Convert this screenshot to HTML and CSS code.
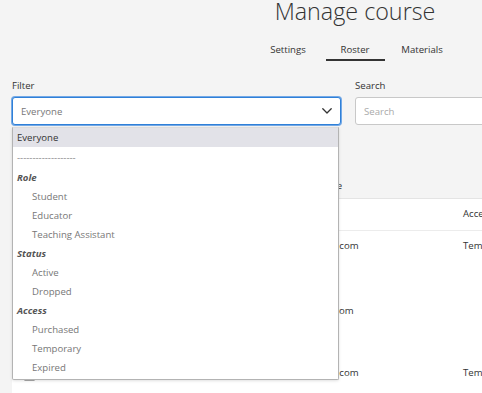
FILE: index.html
```html
<!DOCTYPE html>
<html lang="en">
<head>
<meta charset="utf-8">
<title>Manage course</title>
<link rel="stylesheet" href="styles.css">
</head>
<body>
<div class="page">
  <h1 class="title">Manage course</h1>
  <nav class="tabs">
    <a class="tab">Settings</a>
    <a class="tab active">Roster</a>
    <a class="tab">Materials</a>
  </nav>

  <div class="filters">
    <div class="field filter">
      <label class="label">Filter</label>
      <div class="select">
        <span>Everyone</span>
        <svg class="chevron" width="10" height="6" viewBox="0 0 10 6"><path d="M0.8 0.8 L5 5 L9.2 0.8" fill="none" stroke="#333" stroke-width="1.3" stroke-linecap="round" stroke-linejoin="round"/></svg>
      </div>
      <ul class="listbox">
        <li class="opt sel">Everyone</li>
        <li class="opt dash">-------------------</li>
        <li class="opt group">Role</li>
        <li class="opt indent">Student</li>
        <li class="opt indent">Educator</li>
        <li class="opt indent">Teaching Assistant</li>
        <li class="opt group">Status</li>
        <li class="opt indent">Active</li>
        <li class="opt indent">Dropped</li>
        <li class="opt group">Access</li>
        <li class="opt indent">Purchased</li>
        <li class="opt indent">Temporary</li>
        <li class="opt indent">Expired</li>
      </ul>
    </div>
    <div class="field search">
      <label class="label">Search</label>
      <input class="input" type="text" placeholder="Search">
    </div>
  </div>

  <div class="table">
    <div class="row head">
      <span></span><span>Name</span><span>Email / Username</span><span></span>
    </div>
    <div class="tbody">
      <div class="row sub">
        <span></span><span></span><span></span><span>Access</span>
      </div>
      <div class="row r2">
        <span class="check"></span><span>Alex Johnson</span><span>dave1@example.com</span><span>Temporary</span>
      </div>
      <div class="row r3">
        <span class="check"></span><span>Ana Lopez</span><span>ana1@example.com</span><span></span>
      </div>
      <div class="row r4">
        <span class="check"></span><span>Sam Carter</span><span>dave2@example.com</span><span>Temporary</span>
      </div>
    </div>
  </div>
</div>
</body>
</html>
```

FILE: styles.css
```css
html, body {
  margin: 0;
  padding: 0;
}
body {
  background: #f4f4f4;
  font-family: "Open Sans", "Noto Sans", sans-serif;
  font-size: 9.6px;
  color: #333;
  overflow: hidden;
}
.page {
  width: 710px;
}
.title {
  margin: 0;
  text-align: center;
  font-size: 23.3px;
  font-weight: 300;
  line-height: 23px;
  color: #333;
}
.tabs {
  display: flex;
  justify-content: center;
  margin-top: 16px;
}
.tab {
  width: 59px;
  margin: 0 4px;
  text-align: center;
  padding: 4px 0 2px;
  line-height: 14px;
  border-bottom: 2px solid transparent;
  color: #333;
}
.tab.active {
  border-bottom-color: #333;
}
.filters {
  display: flex;
  gap: 14px;
  padding-left: 12px;
  margin-top: 18px;
}
.label {
  display: block;
  line-height: 14px;
  margin-bottom: 4px;
}
.filter {
  position: relative;
  width: 329px;
}
.select {
  height: 28px;
  box-sizing: border-box;
  border: 1px solid #2f80d8;
  box-shadow: 0 0 0 1px #74a9e6;
  border-radius: 3px;
  background: #fff;
  display: flex;
  align-items: center;
  justify-content: space-between;
  padding: 0 8px 0 8px;
  color: #777;
}
.chevron {
  display: block;
}
.listbox {
  position: absolute;
  top: 48px;
  left: 0;
  width: 327px;
  box-sizing: border-box;
  margin: 0;
  padding: 0 0 2px;
  list-style: none;
  background: #fff;
  border: 1px solid #b3b3b3;
  border-top-color: #dcdcdc;
  border-radius: 0 0 2px 2px;
  box-shadow: 0 1px 3px rgba(0, 0, 0, 0.12);
  z-index: 2;
}
.opt {
  line-height: 19px;
  padding-left: 4px;
  color: #777;
}
.opt.sel {
  background: #e2e2e8;
  color: #333;
}
.opt.dash {
  line-height: 21px;
  color: #888;
}
.opt.group {
  font-weight: 700;
  font-style: italic;
  color: #555;
}
.opt.indent {
  padding-left: 19px;
}
.search {
  width: 330px;
}
.input {
  display: block;
  width: 100%;
  height: 28px;
  box-sizing: border-box;
  border: 1px solid #c8c8c8;
  border-radius: 3px;
  background: #fff;
  padding: 0 8px;
  font: inherit;
  color: #333;
  outline: none;
}
.input::placeholder {
  color: #aaa;
}
.table {
  margin-left: 12px;
  margin-top: 53px;
}
.row {
  display: grid;
  grid-template-columns: 26px 213px 200px 1fr;
  align-items: start;
  line-height: 14px;
  padding-left: 12px;
}
.row.head {
  height: 20px;
  box-sizing: border-box;
  padding-top: 1px;
}
.tbody {
  background: #fff;
  border-top: 1px solid #e4e4e4;
}
.row.sub {
  height: 32px;
  box-sizing: border-box;
  padding-top: 8px;
  border-bottom: 1px solid #ececec;
}
.row.r2, .row.r3, .row.r4 {
  box-sizing: border-box;
  padding-top: 8px;
}
.row.r2 { height: 65px; }
.row.r3 { height: 62px; }
.row.r4 { height: 65px; }
.check {
  display: block;
  width: 11px;
  height: 11px;
  margin-top: 4px;
  box-sizing: border-box;
  border: 1px solid #a9a9a9;
  background: #d4d4d4;
  border-radius: 1px;
}
```
